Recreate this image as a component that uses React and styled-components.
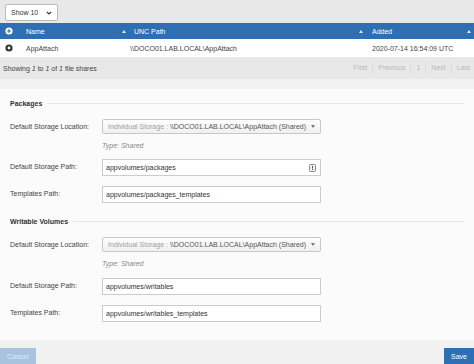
import React from "react";
import styled, { createGlobalStyle } from "styled-components";

const Global = createGlobalStyle`
  html, body { margin: 0; padding: 0; }
  body {
    background: #fbfbfb;
    font-family: "Liberation Sans", Arial, sans-serif;
    font-size: 7px;
    color: #333;
    width: 474px;
    height: 364px;
    overflow: hidden;
  }
`;

const Page = styled.div`
  display: flex;
  flex-direction: column;
  height: 364px;
`;

const TopBar = styled.div`
  background: #e8e8e8;
  padding: 4px 5px 2px;
  height: 17px;
`;

const ShowSelect = styled.div`
  width: 53px;
  height: 17px;
  box-sizing: border-box;
  background: #fff;
  border: 1px solid #bbb;
  border-radius: 2px;
  display: flex;
  align-items: center;
  justify-content: space-between;
  padding: 0 5px 0 5px;
  font-size: 7px;
  color: #333;
`;

const Chevron = () => (
  <svg width="6" height="4" viewBox="0 0 6 4">
    <path d="M0.8 0.8 L3 3 L5.2 0.8" fill="none" stroke="#333" strokeWidth="1.2" />
  </svg>
);

const Row = styled.div`
  display: grid;
  grid-template-columns: 20px 108px 238px 108px;
  height: ${(p) => p.$h}px;
  align-items: center;
  background: ${(p) => (p.$head ? "#2e6fb4" : "#fff")};
  color: ${(p) => (p.$head ? "#fff" : "#444")};
  font-size: 7px;
`;

const Cell = styled.div`
  display: flex;
  align-items: center;
  justify-content: space-between;
  padding: 0 ${(p) => p.$pr || 0}px 0 ${(p) => p.$pl || 0}px;
  white-space: nowrap;
`;

const SortArrow = () => (
  <svg width="4" height="3" viewBox="0 0 4 3">
    <path d="M0 3 L2 0 L4 3 Z" fill="#dce8f5" />
  </svg>
);

const CircleIcon = ({ head }) => (
  <svg width="8" height="8" viewBox="0 0 8 8">
    <circle cx="4" cy="4" r="3.6" fill={head ? "#fff" : "#333"} />
    {head ? (
      <path d="M4 2.2 V5.8 M2.2 4 H5.8" stroke="#2e6fb4" strokeWidth="1.2" />
    ) : (
      <circle cx="4" cy="4" r="1.4" fill="#fff" />
    )}
  </svg>
);

const InfoBar = styled.div`
  background: #e8e8e8;
  height: 22px;
  display: flex;
  align-items: center;
  justify-content: space-between;
  padding: 0 4px 0 3px;
  font-size: 7px;
  color: #444;
  i { font-style: italic; }
`;

const Pager = styled.div`
  display: flex;
  align-items: center;
  color: #b8b8b8;
`;

const PageItem = styled.span`
  padding: 0 ${(p) => (p.$last ? 0 : 5)}px 0 ${(p) => (p.$first ? 0 : 5)}px;
  border-left: ${(p) => (p.$first ? "none" : "1px solid #dcdcdc")};
  line-height: 10px;
`;

const Band = styled.div`
  background: #f2f2f2;
  height: 10px;
`;

const Form = styled.div`
  flex: 1;
  padding: 7px 10px 0 10px;
`;

const Legend = styled.div`
  display: flex;
  align-items: center;
  gap: 5px;
  font-weight: bold;
  font-size: 7px;
  color: #333;
  height: 14px;
  margin-bottom: 9px;
  &::after {
    content: "";
    flex: 1;
    border-top: 1px solid #e6e6e6;
  }
`;

const Field = styled.div`
  display: grid;
  grid-template-columns: 92px 219px;
  align-items: start;
  margin-bottom: ${(p) => p.$mb}px;
`;

const Label = styled.div`
  color: #444;
  line-height: 16px;
`;

const SelectBox = styled.div`
  height: 15px;
  box-sizing: border-box;
  border: 1px solid #c8c8c8;
  border-radius: 2px;
  background: linear-gradient(#fdfdfd, #f0f0f0);
  display: flex;
  align-items: center;
  justify-content: space-between;
  padding: 0 5px 0 5px;
  color: #a0a0a0;
  white-space: nowrap;
  b { font-weight: normal; color: #555; }
`;

const Caret = () => (
  <svg width="4" height="3" viewBox="0 0 4 3">
    <path d="M0 0 L4 0 L2 3 Z" fill="#777" />
  </svg>
);

const Hint = styled.div`
  font-style: italic;
  color: #888;
  margin-top: 8px;
`;

const TextInput = styled.div`
  height: 17px;
  box-sizing: border-box;
  border: 1px solid #ccc;
  background: #fff;
  display: flex;
  align-items: center;
  justify-content: space-between;
  padding: 0 4px 0 3px;
  color: #333;
`;

const KeyIcon = () => (
  <svg width="7" height="8" viewBox="0 0 7 8">
    <rect x="0.5" y="0.5" width="6" height="7" rx="1" fill="#f2f2f2" stroke="#888" />
    <rect x="3" y="2" width="1" height="2.5" fill="#555" />
    <rect x="3" y="5" width="1" height="1" fill="#555" />
  </svg>
);

const Footer = styled.div`
  background: #f1f1f1;
  height: 24px;
  display: flex;
  align-items: flex-end;
  justify-content: space-between;
`;

const Button = styled.div`
  height: 16px;
  padding: 0 7px;
  display: flex;
  align-items: center;
  background: ${(p) => (p.$disabled ? "#a9c3de" : "#2e6fb4")};
  color: ${(p) => (p.$disabled ? "#dfe9f4" : "#fff")};
  font-size: 7px;
`;

const Section = ({ title, sub, top }) => (
  <>
    <Legend>{title}</Legend>
    <Field $mb={top ? 10 : 11}>
      <Label>Default Storage Location:</Label>
      <div>
        <SelectBox>
          <span>
            Individual Storage : <b>\\DOCO01.LAB.LOCAL\AppAttach (Shared)</b>
          </span>
          <Caret />
        </SelectBox>
        <Hint>Type: Shared</Hint>
      </div>
    </Field>
    <Field $mb={10}>
      <Label>Default Storage Path:</Label>
      <TextInput>
        <span>appvolumes/{sub}</span>
        {top && <KeyIcon />}
      </TextInput>
    </Field>
    <Field $mb={top ? 11 : 0}>
      <Label>Templates Path:</Label>
      <TextInput>
        <span>appvolumes/{sub}_templates</span>
      </TextInput>
    </Field>
  </>
);

export default function App() {
  return (
    <Page>
      <Global />
      <TopBar>
        <ShowSelect>
          <span>Show 10</span>
          <Chevron />
        </ShowSelect>
      </TopBar>
      <Row $head $h={16}>
        <Cell $pl={5}>
          <CircleIcon head />
        </Cell>
        <Cell $pl={6} $pr={2}>
          <span>Name</span>
          <SortArrow />
        </Cell>
        <Cell $pl={6} $pr={3}>
          <span>UNC Path</span>
          <SortArrow />
        </Cell>
        <Cell $pl={6} $pr={3}>
          <span>Added</span>
          <SortArrow />
        </Cell>
      </Row>
      <Row $h={18}>
        <Cell $pl={5}>
          <CircleIcon />
        </Cell>
        <Cell $pl={6}>AppAttach</Cell>
        <Cell $pl={2}>\\DOCO01.LAB.LOCAL\AppAttach</Cell>
        <Cell $pl={6}>2020-07-14 16:54:09 UTC</Cell>
      </Row>
      <InfoBar>
        <span>
          Showing <i>1</i> to <i>1</i> of <i>1</i> file shares
        </span>
        <Pager>
          <PageItem $first>First</PageItem>
          <PageItem>Previous</PageItem>
          <PageItem>1</PageItem>
          <PageItem>Next</PageItem>
          <PageItem $last>Last</PageItem>
        </Pager>
      </InfoBar>
      <Band />
      <Form>
        <Section title="Packages" sub="packages" top />
        <Section title="Writable Volumes" sub="writables" />
      </Form>
      <Footer>
        <Button $disabled>Cancel</Button>
        <Button>Save</Button>
      </Footer>
    </Page>
  );
}
